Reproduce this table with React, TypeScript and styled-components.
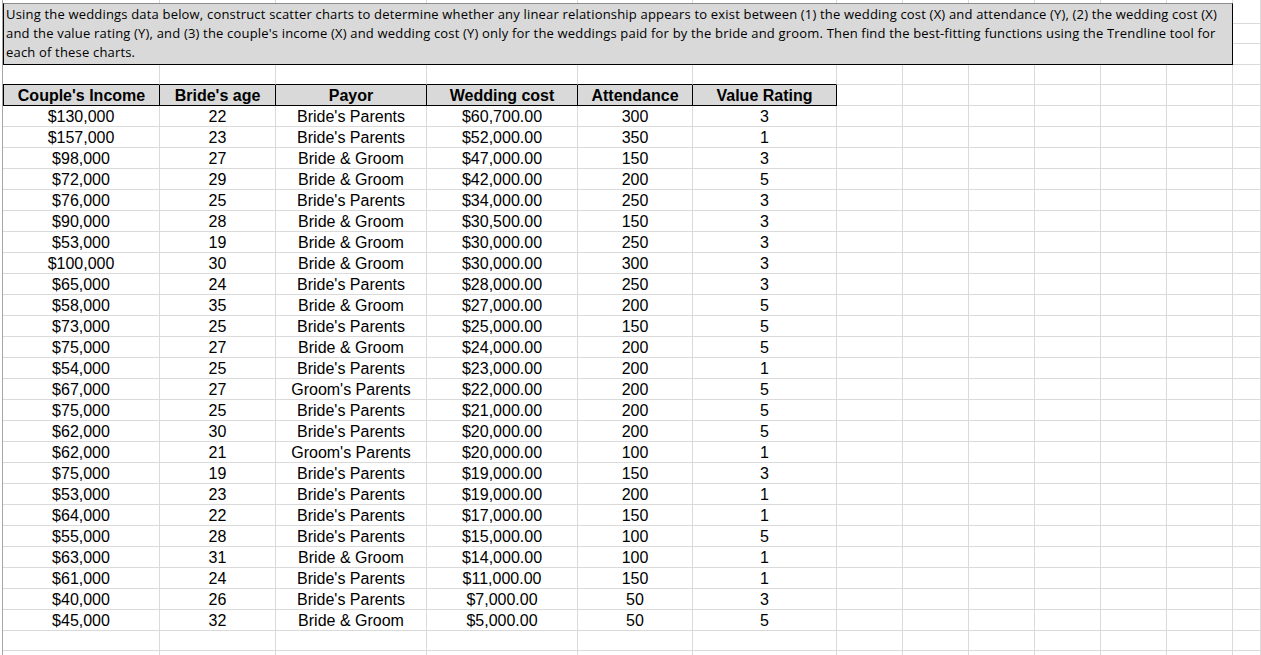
import { Fragment } from 'react';
import styled, { createGlobalStyle } from 'styled-components';

const GlobalStyle = createGlobalStyle`
    html, body {
        margin: 0;
        padding: 0;
        background: #ffffff;
        overflow: hidden;
    }
`

const GRID = '#dadada';
const INK = '#000000';
const HEAD_FILL = '#d9d9d9';

const Sheet = styled.div`
    display: grid;
    grid-template-columns: 157px 116px 151px 151px 115px 144px repeat(6, 66px) 1fr;
    grid-template-rows: 3px 21px 20px 21px 20px 21px repeat(25, 21px) 20px 21px;
    margin-left: 2px;
    border-left: 1px solid #a6a6a6;
    height: 655px;
    overflow: hidden;
    font-family: "Liberation Sans", Arial, sans-serif;
    font-size: 16px;
    color: ${INK};
`

const Cell = styled.div<{ $head?: boolean; $first?: boolean; $edgeBelow?: boolean; $cap?: boolean }>`
    box-sizing: border-box;
    border-right: 1px solid ${p => (p.$head ? INK : GRID)};
    border-bottom: ${p => (p.$cap ? 'none' : `1px solid ${p.$head || p.$edgeBelow ? INK : GRID}`)};
    border-left: ${p => (p.$head && p.$first ? `1px solid ${INK}` : 'none')};
    background: ${p => (p.$head ? HEAD_FILL : 'transparent')};
    font-weight: ${p => (p.$head ? 700 : 400)};
    padding-top: 1px;
    line-height: 20px;
    text-align: center;
    white-space: nowrap;
    overflow: hidden;
`

const NoteBox = styled.div`
    grid-column: 1 / span 12;
    grid-row: span 3;
    box-sizing: border-box;
    border: 1px solid ${INK};
    border-top-color: #8c8c8c;
    background: ${HEAD_FILL};
    padding: 1px 0 0 2px;
    font-family: "Open Sans", "Noto Sans", sans-serif;
    font-size: 13px;
    letter-spacing: 0.18px;
    line-height: 19px;
    color: ${INK};
`

const NoteLine = styled.span`
    display: block;
    white-space: nowrap;
`

const EXTRA_COLS = 7;
const ALL_COLS = 13;

const headers = ["Couple's Income", "Bride's age", 'Payor', 'Wedding cost', 'Attendance', 'Value Rating'];

const weddings: [string, number, string, string, number, number][] = [
    ['$130,000', 22, "Bride's Parents", '$60,700.00', 300, 3],
    ['$157,000', 23, "Bride's Parents", '$52,000.00', 350, 1],
    ['$98,000', 27, 'Bride & Groom', '$47,000.00', 150, 3],
    ['$72,000', 29, 'Bride & Groom', '$42,000.00', 200, 5],
    ['$76,000', 25, "Bride's Parents", '$34,000.00', 250, 3],
    ['$90,000', 28, 'Bride & Groom', '$30,500.00', 150, 3],
    ['$53,000', 19, 'Bride & Groom', '$30,000.00', 250, 3],
    ['$100,000', 30, 'Bride & Groom', '$30,000.00', 300, 3],
    ['$65,000', 24, "Bride's Parents", '$28,000.00', 250, 3],
    ['$58,000', 35, 'Bride & Groom', '$27,000.00', 200, 5],
    ['$73,000', 25, "Bride's Parents", '$25,000.00', 150, 5],
    ['$75,000', 27, 'Bride & Groom', '$24,000.00', 200, 5],
    ['$54,000', 25, "Bride's Parents", '$23,000.00', 200, 1],
    ['$67,000', 27, "Groom's Parents", '$22,000.00', 200, 5],
    ['$75,000', 25, "Bride's Parents", '$21,000.00', 200, 5],
    ['$62,000', 30, "Bride's Parents", '$20,000.00', 200, 5],
    ['$62,000', 21, "Groom's Parents", '$20,000.00', 100, 1],
    ['$75,000', 19, "Bride's Parents", '$19,000.00', 150, 3],
    ['$53,000', 23, "Bride's Parents", '$19,000.00', 200, 1],
    ['$64,000', 22, "Bride's Parents", '$17,000.00', 150, 1],
    ['$55,000', 28, "Bride's Parents", '$15,000.00', 100, 5],
    ['$63,000', 31, 'Bride & Groom', '$14,000.00', 100, 1],
    ['$61,000', 24, "Bride's Parents", '$11,000.00', 150, 1],
    ['$40,000', 26, "Bride's Parents", '$7,000.00', 50, 3],
    ['$45,000', 32, 'Bride & Groom', '$5,000.00', 50, 5],
];

const blanks = (n: number, key: string) =>
    Array.from({ length: n }, (_, i) => <Cell key={`${key}-${i}`} />);

const App = () => {
    return (
        <>
            <GlobalStyle />
            <Sheet>
                {Array.from({ length: ALL_COLS }, (_, i) => <Cell key={`cap-${i}`} $cap />)}

                <NoteBox>
                    <NoteLine>Using the weddings data below, construct scatter charts to determine whether any linear relationship appears to exist between (1) the wedding cost (X) and attendance (Y), (2) the wedding cost (X)</NoteLine>
                    <NoteLine>and the value rating (Y), and (3) the couple's income (X) and wedding cost (Y) only for the weddings paid for by the bride and groom. Then find the best-fitting functions using the Trendline tool for</NoteLine>
                    <NoteLine>each of these charts.</NoteLine>
                </NoteBox>
                {blanks(3, 'note-side')}

                {headers.map((_, i) => <Cell key={`gap-${i}`} $edgeBelow />)}
                {blanks(EXTRA_COLS, 'gap-rest')}

                {headers.map((h, i) => (
                    <Cell key={`h-${i}`} $head $first={i === 0}>{h}</Cell>
                ))}
                {blanks(EXTRA_COLS, 'h-rest')}

                {weddings.map((row, r) => (
                    <Fragment key={`row-${r}`}>
                        {row.map((v, c) => <Cell key={`d-${r}-${c}`}>{v}</Cell>)}
                        {blanks(EXTRA_COLS, `d-rest-${r}`)}
                    </Fragment>
                ))}

                {blanks(ALL_COLS * 2, 'tail')}
            </Sheet>
        </>
    );
};

export default App;
